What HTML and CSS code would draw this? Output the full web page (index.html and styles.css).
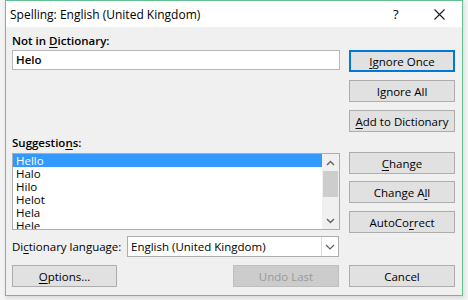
FILE: index.html
```html
<!DOCTYPE html>
<html>
<head>
<meta charset="utf-8">
<link rel="stylesheet" href="styles.css">
</head>
<body>
<div class="window">
  <div class="titlebar">
    <span class="title">Spelling: English (United Kingdom)</span>
    <span class="help">?</span>
    <span class="close"><svg width="11" height="11" viewBox="0 0 11 11"><path d="M0.5 0.5 L10.5 10.5 M10.5 0.5 L0.5 10.5" stroke="#1a1a1a" stroke-width="1.1" fill="none"/></svg></span>
  </div>
  <div class="content">
    <div class="main">
      <div class="left">
        <div class="label bold">Not in <u>D</u>ictionary:</div>
        <div class="input">Helo</div>
        <div class="label bold sugg">Suggestio<u>n</u>s:</div>
        <div class="list">
          <div class="items">
            <div class="item selected">Hello</div>
            <div class="item">Halo</div>
            <div class="item">Hilo</div>
            <div class="item">Helot</div>
            <div class="item">Hela</div>
            <div class="item">Hele</div>
          </div>
          <div class="scrollbar">
            <div class="arrow"><svg width="9" height="6" viewBox="0 0 9 6"><path d="M1 5 L4.5 1.5 L8 5" stroke="#606060" stroke-width="1.4" fill="none"/></svg></div>
            <div class="thumb"></div>
            <div class="track"></div>
            <div class="arrow"><svg width="9" height="6" viewBox="0 0 9 6"><path d="M1 1 L4.5 4.5 L8 1" stroke="#606060" stroke-width="1.4" fill="none"/></svg></div>
          </div>
        </div>
      </div>
      <div class="right">
        <div class="btn default"><u>I</u>gnore Once</div>
        <div class="btn gap8">I<u>g</u>nore All</div>
        <div class="btn gap8"><u>A</u>dd to Dictionary</div>
        <div class="btn gap20"><u>C</u>hange</div>
        <div class="btn gap7">Change A<u>l</u>l</div>
        <div class="btn gap8">AutoCo<u>r</u>rect</div>
      </div>
    </div>
    <div class="langrow">
      <div class="langlabel">Di<u>c</u>tionary language:</div>
      <div class="combo">
        <div class="combotext">English (United Kingdom)</div>
        <div class="combobtn"><svg width="10" height="6" viewBox="0 0 10 6"><path d="M1 1 L5 5 L9 1" stroke="#606060" stroke-width="1.2" fill="none"/></svg></div>
      </div>
    </div>
    <div class="bottom">
      <div class="btn wide"><u>O</u>ptions...</div>
      <div class="btn wide disabled">Undo Last</div>
      <div class="btn wide">Cancel</div>
    </div>
  </div>
</div>
</body>
</html>
```
FILE: styles.css
```css
* { box-sizing: border-box; }
html, body { margin: 0; padding: 0; }
body {
  background: #f4f4f4;
  width: 468px;
  height: 300px;
  overflow: hidden;
  font-family: "Open Sans", "Noto Sans", sans-serif;
  font-size: 11.5px;
  color: #000;
}
u { text-decoration: underline; text-underline-offset: 2px; }
.window {
  margin-left: 5px;
  width: 458px;
  height: 296px;
  border: 1px solid #63c28f;
  background: #f0f0f0;
  box-shadow: 1px 2px 4px rgba(0,0,0,0.12);
  display: flex;
  flex-direction: column;
}
.titlebar {
  height: 26px;
  background: #fff;
  display: flex;
  align-items: center;
  padding-left: 4px;
}
.title {
  font-size: 12px;
  flex: 1;
}
.help {
  font-size: 13px;
  width: 20px;
  margin-right: 21px;
}
.close {
  width: 11px;
  margin-right: 17px;
  display: flex;
}
.content {
  flex: 1;
  padding: 6px 7px 8px 6px;
  display: flex;
  flex-direction: column;
}
.main {
  display: flex;
  gap: 9px;
}
.left {
  width: 328px;
  display: flex;
  flex-direction: column;
}
.label {
  height: 16px;
  line-height: 16px;
  margin-bottom: 1px;
}
.bold { font-weight: 600; }
.sugg { margin-top: 65px; margin-bottom: 2px; }
.input {
  height: 20px;
  background: #fff;
  border: 1px solid #b9b9b9;
  padding-left: 3px;
  line-height: 18px;
  font-weight: 600;
}
.list {
  height: 77px;
  background: #fff;
  border: 1px solid #adadad;
  display: flex;
  overflow: hidden;
}
.items {
  flex: 1;
  overflow: hidden;
}
.item {
  height: 13px;
  line-height: 13px;
  padding-left: 3px;
}
.item.selected {
  background: #3399ff;
  color: #fff;
}
.scrollbar {
  width: 17px;
  background: #f0f0f0;
  display: flex;
  flex-direction: column;
  align-items: center;
}
.arrow {
  height: 17px;
  display: flex;
  align-items: center;
  justify-content: center;
}
.thumb {
  width: 15px;
  height: 26px;
  background: #cdcdcd;
}
.track { flex: 1; }
.right {
  width: 106px;
  padding-top: 17px;
  display: flex;
  flex-direction: column;
}
.btn {
  height: 22px;
  background: #e1e1e1;
  border: 1px solid #adadad;
  display: flex;
  align-items: center;
  justify-content: center;
}
.btn.default { border: 2px solid #0078d7; }
.gap8 { margin-top: 8px; }
.gap7 { margin-top: 7px; }
.gap20 { margin-top: 20px; }
.langrow {
  margin-top: 3px;
  display: flex;
  align-items: center;
  height: 21px;
}
.langlabel {
  width: 115px;
}
.combo {
  width: 212px;
  height: 21px;
  background: #fff;
  border: 1px solid #adadad;
  display: flex;
}
.combotext {
  flex: 1;
  padding-left: 3px;
  line-height: 19px;
}
.combobtn {
  width: 17px;
  border-left: 1px solid #dcdcdc;
  display: flex;
  align-items: center;
  justify-content: center;
}
.bottom {
  margin-top: 8px;
  display: flex;
}
.wide { width: 105px; }
.bottom .wide:nth-child(2) { margin-left: 116px; width: 106px; }
.bottom .wide:nth-child(3) { margin-left: 10px; width: 106px; }
.btn.disabled {
  background: #cccccc;
  border-color: #bfbfbf;
  color: #9a9a9a;
}
```
